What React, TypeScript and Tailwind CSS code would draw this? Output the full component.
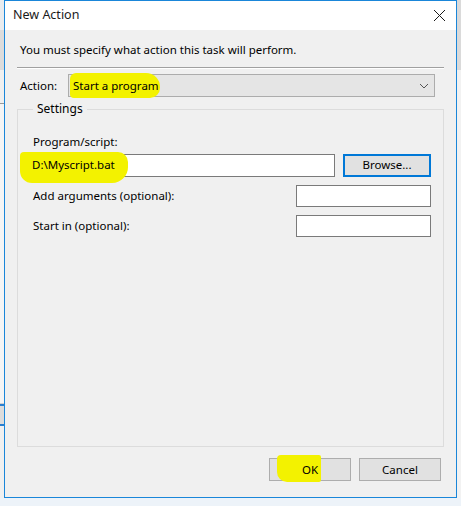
export default function App() {
	return (
		<div className="w-[461px] h-[506px] overflow-hidden bg-[#eef2f6] font-['Noto_Sans',sans-serif] text-[11.5px] text-black leading-none flex flex-col">
			<div className="flex h-[498px]">
				{/* window behind, left edge */}
				<div className="w-[4px] flex flex-col bg-[#f3f3f3]">
					<div className="h-[30px] bg-[#e9ecef]"></div>
					<div className="h-[40px] bg-[#dcdcdc]"></div>
					<div className="h-[34px] bg-[#f0f0f0] border-b border-[#9a9a9a]"></div>
					<div className="h-[300px] bg-[#f5f5f5] border-b border-[#d0d0d0]"></div>
					<div className="h-[22px] bg-[#dcdcdc] border-y-2 border-[#2a7fd0]"></div>
					<div className="flex-1 bg-[#f0f0f0]"></div>
				</div>

				{/* dialog */}
				<div className="w-[453px] border border-[#1a86d9] bg-[#f0f0f0] flex flex-col">
					<div className="h-[29px] bg-white flex items-center justify-between pl-2 pr-[8px]">
						<span className="text-[12.5px] text-[#1a1a1a]">New Action</span>
						<svg width="13" height="13" viewBox="0 0 13 13" className="mr-[2px]">
							<path d="M1 1 L12 12 M12 1 L1 12" stroke="#1a1a1a" strokeWidth="1" fill="none" />
						</svg>
					</div>

					<div className="flex-1 flex flex-col px-3">
						<div className="pt-[14px] pl-[3px] h-[37px]">You must specify what action this task will perform.</div>
						<div className="border-t border-[#a0a0a0] border-b border-b-white"></div>

						<div className="flex items-center mt-[5px] pr-[9px]">
							<span className="w-[51px] pl-[3px]">Action:</span>
							<div className="relative flex-1 h-[23px] bg-[#e5e5e5] border border-[#acacac] flex items-center justify-between pl-[4px] pr-[5px]">
								<span className="absolute left-[1px] top-[-2px] w-[90px] h-[25px] bg-[#f3f200] rounded-[6px_14px_10px_4px]"></span>
								<span className="relative">Start a program</span>
								<svg width="10" height="6" viewBox="0 0 10 6" className="relative">
									<path d="M1 1 L5 5 L9 1" stroke="#555" strokeWidth="1" fill="none" />
								</svg>
							</div>
						</div>

						<fieldset className="mt-[6px] h-[344px] border border-[#dcdcdc] px-[11px] pb-0 pt-0 flex flex-col">
							<legend className="ml-[4px] px-[4px] text-[12px]">Settings</legend>
							<div className="mt-[21px] pl-[4px]">Program/script:</div>
							<div className="flex items-center mt-[6px] pr-[1px]">
								<div className="relative w-[306px] h-[23px] bg-white border border-[#7a7a7a] flex items-center pl-[2px]">
									<span className="absolute left-[-10px] top-[-3px] w-[108px] h-[31px] bg-[#f3f200] rounded-[4px_10px_16px_12px]"></span>
									<span className="relative">D:\Myscript.bat</span>
								</div>
								<button className="ml-[8px] w-[88px] h-[23px] bg-[#e1e1e1] border-2 border-[#0078d7] flex items-center justify-center">
									Browse...
								</button>
							</div>
							<div className="flex items-center justify-between mt-[8px] pr-[1px]">
								<span className="pl-[4px]">Add arguments (optional):</span>
								<div className="w-[135px] h-[22px] bg-white border border-[#7a7a7a]"></div>
							</div>
							<div className="flex items-center justify-between mt-[8px] pr-[1px]">
								<span className="pl-[4px]">Start in (optional):</span>
								<div className="w-[135px] h-[22px] bg-white border border-[#7a7a7a]"></div>
							</div>
						</fieldset>

						<div className="flex justify-end gap-[8px] mt-[11px] pr-[3px]">
							<button className="relative w-[82px] h-[23px] bg-[#e1e1e1] border border-[#adadad] flex items-center justify-center">
								<span className="absolute left-[7px] top-[-4px] w-[44px] h-[27px] bg-[#f3f200] rounded-[4px_2px_2px_10px]"></span>
								<span className="relative">OK</span>
							</button>
							<button className="w-[82px] h-[23px] bg-[#e1e1e1] border border-[#adadad] flex items-center justify-center">
								Cancel
							</button>
						</div>
					</div>
				</div>

				{/* window behind, right edge */}
				<div className="flex-1 flex flex-col bg-[#f4f4f4]">
					<div className="h-[70px] bg-[#dadada]"></div>
					<div className="flex-1 bg-[#f2f2f2]"></div>
				</div>
			</div>
			<div className="flex-1 bg-[#edf3f9]"></div>
		</div>
	);
}
